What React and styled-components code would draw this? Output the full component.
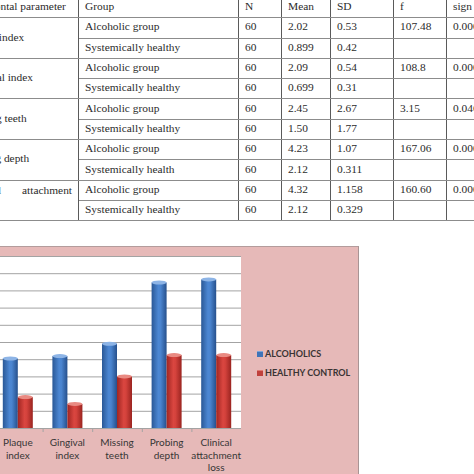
import React from 'react'
import styled, { createGlobalStyle } from 'styled-components';

const GlobalStyle = createGlobalStyle`
  html, body {
    margin: 0;
    padding: 0;
    background: #fff;
    overflow: hidden;
  }
`

const rows = [
    { param: 'Plaque index', groups: [
        ['Alcoholic group', '60', '2.02', '0.53', '107.48', '0.000'],
        ['Systemically healthy', '60', '0.899', '0.42', '', ''],
    ] },
    { param: 'Gingival index', groups: [
        ['Alcoholic group', '60', '2.09', '0.54', '108.8', '0.000'],
        ['Systemically healthy', '60', '0.699', '0.31', '', ''],
    ] },
    { param: 'Missing teeth', groups: [
        ['Alcoholic group', '60', '2.45', '2.67', '3.15', '0.046'],
        ['Systemically healthy', '60', '1.50', '1.77', '', ''],
    ] },
    { param: 'Probing depth', groups: [
        ['Alcoholic group', '60', '4.23', '1.07', '167.06', '0.000'],
        ['Systemically health', '60', '2.12', '0.311', '', ''],
    ] },
    { param: 'Clinical attachment loss', groups: [
        ['Alcoholic group', '60', '4.32', '1.158', '160.60', '0.000'],
        ['Systemically healthy', '60', '2.12', '0.329', '', ''],
    ] },
]

const chartData = [
    { label: ['Plaque', 'index'], a: 2.02, h: 0.899 },
    { label: ['Gingival', 'index'], a: 2.09, h: 0.699 },
    { label: ['Missing', 'teeth'], a: 2.45, h: 1.5 },
    { label: ['Probing', 'depth'], a: 4.23, h: 2.12 },
    { label: ['Clinical', 'attachment', 'loss'], a: 4.32, h: 2.12 },
]

const PLOT_W = 248
const PLOT_H = 172
const SLOT = PLOT_W / 5
const BAR_W = 15

const Cylinder = ({ x, value, kind }) => {
    const h = (value / 5) * PLOT_H
    const y = PLOT_H - h
    return (
        <g>
            <rect x={x} y={y} width={BAR_W} height={h} fill={`url(#grad-${kind})`} />
            <ellipse cx={x + BAR_W / 2} cy={y} rx={BAR_W / 2} ry={2} fill={kind === 'a' ? '#8db4e6' : '#e98a82'} />
        </g>
    )
}

const Plot = () => (
    <svg width={PLOT_W} height={PLOT_H + 5} style={{ display: 'block' }}>
        <defs>
            <linearGradient id="grad-a" x1="0" x2="1" y1="0" y2="0">
                <stop offset="0" stopColor="#2a5896" />
                <stop offset="0.45" stopColor="#4c87d3" />
                <stop offset="0.6" stopColor="#4a84cf" />
                <stop offset="1" stopColor="#26508c" />
            </linearGradient>
            <linearGradient id="grad-h" x1="0" x2="1" y1="0" y2="0">
                <stop offset="0" stopColor="#a02622" />
                <stop offset="0.45" stopColor="#da4640" />
                <stop offset="0.6" stopColor="#d4423c" />
                <stop offset="1" stopColor="#9a2420" />
            </linearGradient>
        </defs>
        <rect x="0" y="0" width={PLOT_W} height={PLOT_H} fill="#fff" />
        {Array.from({ length: 11 }, (_, i) => (
            <line key={i} x1="0" x2={PLOT_W} y1={0.5 + i * (PLOT_H / 10)} y2={0.5 + i * (PLOT_H / 10)} stroke="#a3a3a3" strokeWidth="1" />
        ))}
        {Array.from({ length: 6 }, (_, i) => (
            <line key={i} x1={i * SLOT + 0.5} x2={i * SLOT + 0.5} y1={PLOT_H} y2={PLOT_H + 4} stroke="#a3a3a3" strokeWidth="1" />
        ))}
        {chartData.map((d, i) => {
            const cx = SLOT * i + SLOT / 2
            return (
                <g key={i}>
                    <Cylinder x={cx - BAR_W} value={d.a} kind="a" />
                    <Cylinder x={cx} value={d.h} kind="h" />
                </g>
            )
        })}
    </svg>
)

const Chart = () => {
    return (
        <Panel>
            <PlotColumn>
                <Plot />
                <Labels>
                    {chartData.map((d, i) => (
                        <Label key={i}>{d.label.map((l, j) => <span key={j}>{l}</span>)}</Label>
                    ))}
                </Labels>
            </PlotColumn>
            <Legend>
                <LegendItem><Swatch $color="#3f74b8" $edge="#7fa6d8" />ALCOHOLICS</LegendItem>
                <LegendItem><Swatch $color="#c0413c" $edge="#e07c75" />HEALTHY CONTROL</LegendItem>
            </Legend>
        </Panel>
    )
}

const App = () => {
    return (
        <Page>
            <GlobalStyle />
            <Table>
                <colgroup>
                    <col style={{ width: 120 }} />
                    <col style={{ width: 160 }} />
                    <col style={{ width: 43 }} />
                    <col style={{ width: 49 }} />
                    <col style={{ width: 63 }} />
                    <col style={{ width: 53 }} />
                    <col style={{ width: 60 }} />
                </colgroup>
                <thead>
                    <tr>
                        <Cell>Periodontal parameter</Cell>
                        <Cell>Group</Cell>
                        <Cell>N</Cell>
                        <Cell>Mean</Cell>
                        <Cell>SD</Cell>
                        <Cell>f</Cell>
                        <Cell>sign</Cell>
                    </tr>
                </thead>
                <tbody>
                    {rows.map((r) => r.groups.map((g, j) => (
                        <tr key={r.param + j}>
                            {j === 0 && <ParamCell rowSpan={2}>{r.param}</ParamCell>}
                            {g.map((v, k) => <Cell key={k}>{v}</Cell>)}
                        </tr>
                    )))}
                </tbody>
            </Table>
            <Chart />
        </Page>
    )
}

const Page = styled.div`
  width: 474px;
  height: 474px;
  overflow: hidden;
  background: #fff;
`

const Table = styled.table`
  margin: -3px 0 0 -42px;
  border-collapse: collapse;
  table-layout: fixed;
  width: 548px;
  font-family: "Liberation Serif", "Times New Roman", serif;
  font-size: 11.4px;
  color: #2b2b2b;

  tr {
    height: 20.3px;
  }
`

const Cell = styled.td`
  padding: 0 4px 2px 6px;
  border-top: 1px solid #8c8c8c;
  border-bottom: 1px solid #8c8c8c;
  border-left: 1px solid #5a5a5a;
  border-right: 1px solid #5a5a5a;
  vertical-align: middle;
  line-height: 13px;
  white-space: nowrap;
  overflow: hidden;
`

const ParamCell = styled(Cell)`
  white-space: normal;
  text-align: justify;
  padding-right: 6px;
  line-height: 17px;
`

const Panel = styled.div`
  margin: 25px 0 0 -20px;
  width: 378px;
  height: 240px;
  background: #e6b9b8;
  border-top: 1px solid #b39c9c;
  border-right: 1px solid #a89494;
  padding-top: 9px;
  display: flex;
`

const PlotColumn = styled.div`
  margin-left: 13px;
  width: 248px;
  display: flex;
  flex-direction: column;
`

const Labels = styled.div`
  display: grid;
  grid-template-columns: repeat(5, 1fr);
  padding-top: 3px;
`

const Label = styled.div`
  display: flex;
  flex-direction: column;
  align-items: center;
  font-family: Lato, "Open Sans", sans-serif;
  font-size: 10px;
  line-height: 12.5px;
  color: #363636;
`

const Legend = styled.div`
  padding: 92px 0 0 16px;
  display: flex;
  flex-direction: column;
  gap: 7px;
`

const LegendItem = styled.div`
  display: flex;
  align-items: center;
  gap: 2px;
  font-family: Lato, "Open Sans", sans-serif;
  font-weight: 700;
  font-size: 9px;
  line-height: 12px;
  color: #3a3434;
  white-space: nowrap;
`

const Swatch = styled.span`
  width: 6px;
  height: 6px;
  background: ${p => p.$color};
  border-top: 1px solid ${p => p.$edge};
  box-sizing: border-box;
`

export default App;
